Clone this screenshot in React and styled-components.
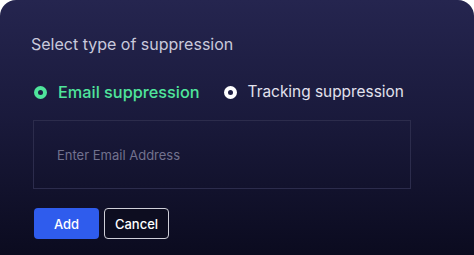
import React, { useState } from "react";
import styled, { createGlobalStyle } from "styled-components";

const GlobalStyle = createGlobalStyle`
  html, body {
    margin: 0;
    padding: 0;
    background: #ffffff;
  }
  body {
    font-family: Inter, "Noto Sans", sans-serif;
  }
`;

const Card = styled.div`
  width: 474px;
  height: 255px;
  box-sizing: border-box;
  border-radius: 16px 16px 0 0;
  background: linear-gradient(180deg, #25254f 0%, #1a1a3c 45%, #0b0b1f 100%);
  padding: 33px 31px 0 31px;
  display: flex;
  flex-direction: column;
`;

const Title = styled.h2`
  margin: 0;
  font-size: 16px;
  font-weight: 400;
  color: #c9c9dc;
  line-height: 22px;
`;

const RadioRow = styled.div`
  display: flex;
  align-items: center;
  gap: 24px;
  margin-top: 25px;
  padding-left: 3px;
`;

const RadioLabel = styled.label`
  display: flex;
  align-items: center;
  gap: 11px;
  font-size: ${(p) => (p.$active ? 16.3 : 15.4)}px;
  font-weight: ${(p) => (p.$active ? 500 : 400)};
  color: ${(p) => (p.$active ? "#4fe59c" : "#e2e2ee")};
  cursor: pointer;
  line-height: 24px;
`;

const Dot = styled.span`
  width: 13px;
  height: 13px;
  border-radius: 50%;
  box-sizing: border-box;
  background: ${(p) => (p.$active ? "#4fe59c" : "#ffffff")};
  display: flex;
  align-items: center;
  justify-content: center;

  &::after {
    content: "";
    width: 5px;
    height: 5px;
    border-radius: 50%;
    background: #1f1f45;
  }
`;

const InputBox = styled.div`
  margin-top: 16px;
  margin-left: 2px;
  width: 378px;
  height: 69px;
  box-sizing: border-box;
  border: 1px solid #2c2c4c;
  display: flex;
  align-items: center;
  padding-left: 23px;
`;

const Input = styled.input`
  background: transparent;
  border: none;
  outline: none;
  width: 100%;
  padding: 0;
  font-family: Inter, "Noto Sans", sans-serif;
  font-size: 13px;
  color: #e2e2ee;

  &::placeholder {
    color: #72728e;
  }
`;

const Actions = styled.div`
  display: flex;
  gap: 5px;
  margin-top: 19px;
  margin-left: 3px;
`;

const Button = styled.button`
  height: 31px;
  width: 65px;
  box-sizing: border-box;
  border-radius: 4px;
  font-family: Inter, "Noto Sans", sans-serif;
  font-size: 13px;
  font-weight: 500;
  color: #ffffff;
  cursor: pointer;
  background: ${(p) => (p.$primary ? "#2f5ced" : "#0d0d20")};
  border: ${(p) => (p.$primary ? "none" : "1.5px solid #cfcfd8")};
`;

export default function App() {
  const [type, setType] = useState("email");
  return (
    <>
      <GlobalStyle />
      <Card>
        <Title>Select type of suppression</Title>
        <RadioRow>
          <RadioLabel $active={type === "email"} onClick={() => setType("email")}>
            <Dot $active={type === "email"} />
            Email suppression
          </RadioLabel>
          <RadioLabel $active={type === "tracking"} onClick={() => setType("tracking")}>
            <Dot $active={type === "tracking"} />
            Tracking suppression
          </RadioLabel>
        </RadioRow>
        <InputBox>
          <Input placeholder="Enter Email Address" />
        </InputBox>
        <Actions>
          <Button $primary>Add</Button>
          <Button>Cancel</Button>
        </Actions>
      </Card>
    </>
  );
}
